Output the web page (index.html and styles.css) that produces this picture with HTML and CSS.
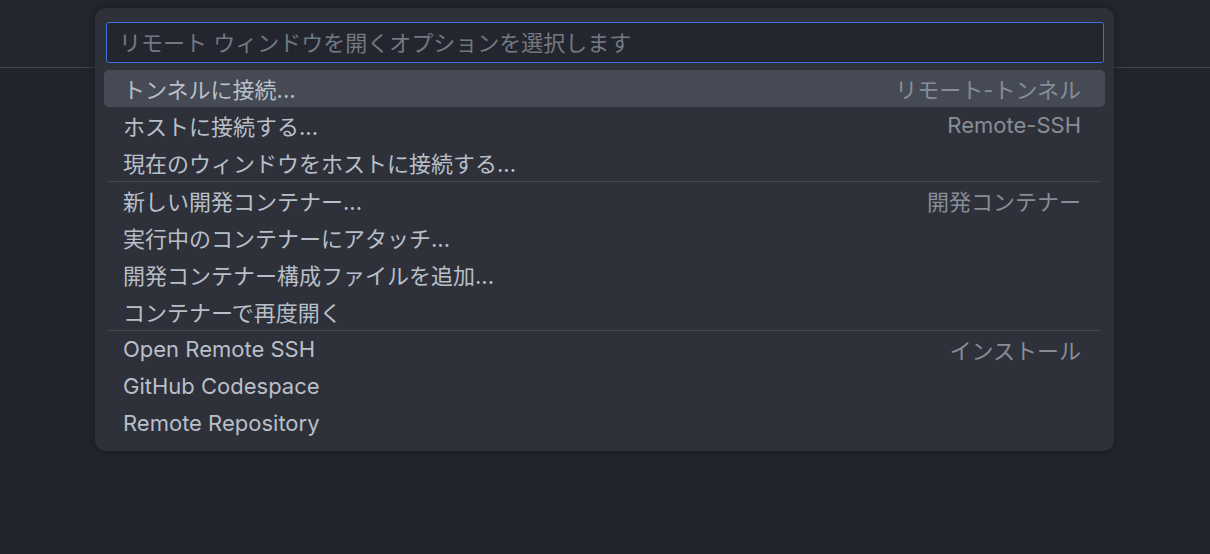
FILE: index.html
```html
<!DOCTYPE html>
<html lang="ja">
<head>
<meta charset="utf-8">
<link rel="stylesheet" href="styles.css">
</head>
<body>
<div class="topbar"></div>
<div class="picker">
  <div class="input"><span class="placeholder">リモート ウィンドウを開くオプションを選択します</span></div>
  <div class="list">
    <div class="row active"><span class="label">トンネルに接続...</span><span class="desc">リモート-トンネル</span></div>
    <div class="row"><span class="label">ホストに接続する...</span><span class="desc">Remote-SSH</span></div>
    <div class="row"><span class="label">現在のウィンドウをホストに接続する...</span></div>
    <div class="sep"></div>
    <div class="row"><span class="label">新しい開発コンテナー...</span><span class="desc">開発コンテナー</span></div>
    <div class="row"><span class="label">実行中のコンテナーにアタッチ...</span></div>
    <div class="row"><span class="label">開発コンテナー構成ファイルを追加...</span></div>
    <div class="row"><span class="label">コンテナーで再度開く</span></div>
    <div class="sep"></div>
    <div class="row"><span class="label">Open Remote SSH</span><span class="desc">インストール</span></div>
    <div class="row"><span class="label">GitHub Codespace</span></div>
    <div class="row"><span class="label">Remote Repository</span></div>
  </div>
</div>
</body>
</html>
```
FILE: styles.css
```css
html, body {
  margin: 0;
  padding: 0;
  height: 100%;
}
body {
  background: #22252c;
  font-family: "Inter", "Noto Sans CJK JP", sans-serif;
  font-size: 22px;
  color: #b5bbc5;
  overflow: hidden;
}
.topbar {
  height: 67px;
  border-bottom: 1px solid #3f434b;
  background: #23262e;
}
.picker {
  position: absolute;
  left: 95px;
  top: 8px;
  width: 1019px;
  box-sizing: border-box;
  padding: 14px 9px 9px 9px;
  background: #2e313a;
  border-radius: 10px;
  box-shadow: 0 0 10px rgba(0, 0, 0, 0.35);
}
.input {
  margin: 0 1px 0 2px;
  height: 41px;
  box-sizing: border-box;
  border: 1px solid #3f6fd8;
  border-radius: 3px;
  background: #23262e;
  display: flex;
  align-items: center;
  padding: 0 0 3px 12px;
}
.placeholder {
  color: #737983;
  font-size: 22px;
}
.list {
  margin-top: 7px;
  display: flex;
  flex-direction: column;
}
.row {
  height: 37px;
  box-sizing: border-box;
  display: flex;
  align-items: center;
  justify-content: space-between;
  padding: 0 24px 2px 19px;
  border-radius: 5px;
  white-space: nowrap;
}
.row.active {
  background: #454a54;
}
.label {
  color: #b9bfc9;
}
.desc {
  color: #878d97;
}
.sep {
  height: 1px;
  background: #454952;
  margin: 0 4px 0 3px;
}
```
